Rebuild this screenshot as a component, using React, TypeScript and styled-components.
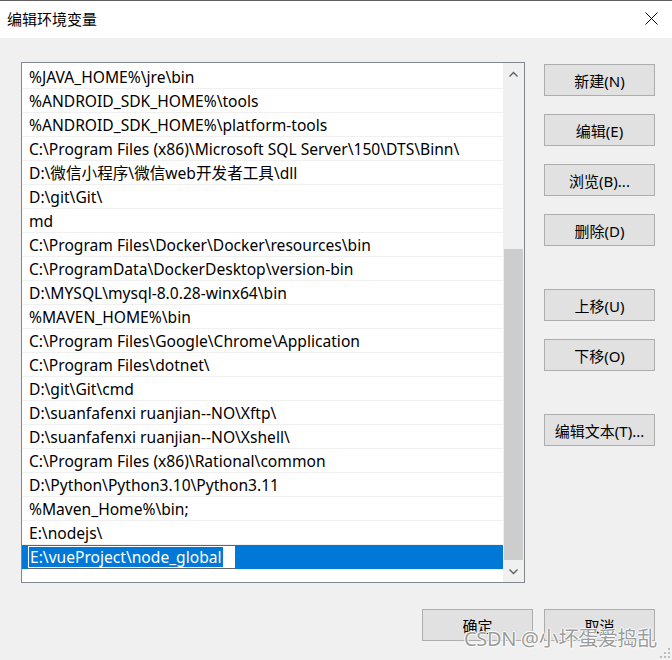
import React from 'react';
import styled, { createGlobalStyle } from 'styled-components';

const GlobalStyle = createGlobalStyle`
  html, body {
    margin: 0;
    padding: 0;
    background: #f0f0f0;
  }
  * {
    box-sizing: border-box;
  }
`;

const UI_FONT = `"Noto Sans", "Noto Sans CJK SC", sans-serif`;

const Window = styled.div`
  position: relative;
  width: 672px;
  height: 660px;
  background: #f0f0f0;
  display: flex;
  flex-direction: column;
  font-family: ${UI_FONT};
  color: #000;
  overflow: hidden;
`;

const TitleBar = styled.div`
  height: 38px;
  flex-shrink: 0;
  background: #fff;
  border-top: 1px solid #5f5f5f;
  display: flex;
  align-items: center;
  justify-content: space-between;
  padding: 0 14px 2px 7px;
`;

const Title = styled.div`
  font-family: "Noto Sans CJK SC", sans-serif;
  font-size: 15px;
`;

const CloseButton = styled.div`
  width: 13px;
  height: 13px;
  display: flex;
`;

const Body = styled.div`
  flex: 1;
  display: flex;
  flex-direction: column;
  padding: 24px 17px 0 21px;
`;

const Main = styled.div`
  display: flex;
  gap: 19px;
`;

const ListBox = styled.div`
  width: 504px;
  height: 521px;
  border: 1px solid #828790;
  background: #fff;
  display: flex;
`;

const Rows = styled.div`
  flex: 1;
  padding-top: 2px;
  display: flex;
  flex-direction: column;
`;

const Row = styled.div<{ $selected?: boolean }>`
  height: 24px;
  flex-shrink: 0;
  border-bottom: 1px solid ${({ $selected }) => ($selected ? '#0078d7' : '#f0f0f0')};
  background: ${({ $selected }) => ($selected ? '#0078d7' : '#fff')};
  display: flex;
  align-items: center;
  padding-left: 7px;
  font-size: 15.6px;
  white-space: nowrap;
`;

const EditBox = styled.div`
  margin-left: -2px;
  height: 24px;
  margin-top: 1px;
  width: 209px;
  background: #fff;
  border: 1px solid #646464;
  display: flex;
  align-items: stretch;
  padding: 1px;
`;

const EditSelection = styled.span`
  background: #0078d7;
  color: #fff;
  display: flex;
  align-items: center;
  padding: 0 1px;
`;

const ScrollBar = styled.div`
  width: 21px;
  background: #f0f0f0;
  display: flex;
  flex-direction: column;
`;

const ScrollArrow = styled.div`
  height: 21px;
  flex-shrink: 0;
  display: flex;
  align-items: center;
  justify-content: center;
`;

const ScrollTrack = styled.div`
  flex: 1;
  display: flex;
  flex-direction: column;
  padding: 0 1px;
`;

const Thumb = styled.div`
  background: #cdcdcd;
`;

const ButtonColumn = styled.div`
  display: flex;
  flex-direction: column;
  padding-top: 2px;
`;

const Button = styled.div<{ $gap?: number }>`
  width: 111px;
  height: 32px;
  margin-top: ${({ $gap }) => $gap ?? 0}px;
  background: #e1e1e1;
  border: 1px solid #adadad;
  display: flex;
  align-items: center;
  justify-content: center;
  font-family: ${UI_FONT};
  font-size: 15px;
  white-space: nowrap;
`;

const Footer = styled.div`
  display: flex;
  justify-content: flex-end;
  gap: 11px;
  margin-top: 26px;
`;

const Watermark = styled.div`
  position: absolute;
  right: 15px;
  bottom: 8px;
  font-family: "Noto Sans", "Noto Sans CJK SC", sans-serif;
  font-size: 20px;
  color: #9b9b9b;
  letter-spacing: -0.3px;
  text-shadow: 1px 0 0 #fff, -1px 0 0 #fff, 0 1px 0 #fff, 0 -1px 0 #fff;
  pointer-events: none;
`;

const Grip = styled.div`
  position: absolute;
  right: 1px;
  bottom: 1px;
  width: 11px;
  height: 11px;
  display: flex;
`;

const paths = [
  '%JAVA_HOME%\\jre\\bin',
  '%ANDROID_SDK_HOME%\\tools',
  '%ANDROID_SDK_HOME%\\platform-tools',
  'C:\\Program Files (x86)\\Microsoft SQL Server\\150\\DTS\\Binn\\',
  'D:\\微信小程序\\微信web开发者工具\\dll',
  'D:\\git\\Git\\',
  'md',
  'C:\\Program Files\\Docker\\Docker\\resources\\bin',
  'C:\\ProgramData\\DockerDesktop\\version-bin',
  'D:\\MYSQL\\mysql-8.0.28-winx64\\bin',
  '%MAVEN_HOME%\\bin',
  'C:\\Program Files\\Google\\Chrome\\Application',
  'C:\\Program Files\\dotnet\\',
  'D:\\git\\Git\\cmd',
  'D:\\suanfafenxi ruanjian--NO\\Xftp\\',
  'D:\\suanfafenxi ruanjian--NO\\Xshell\\',
  'C:\\Program Files (x86)\\Rational\\common',
  'D:\\Python\\Python3.10\\Python3.11',
  '%Maven_Home%\\bin;',
  'E:\\nodejs\\',
  'E:\\vueProject\\node_global',
];

const sideButtons = [
  { label: '新建(N)', gap: 0 },
  { label: '编辑(E)', gap: 18 },
  { label: '浏览(B)...', gap: 18 },
  { label: '删除(D)', gap: 18 },
  { label: '上移(U)', gap: 43 },
  { label: '下移(O)', gap: 18 },
  { label: '编辑文本(T)...', gap: 43 },
];

const Chevron = ({ up }: { up?: boolean }) => (
  <svg width="9" height="6" viewBox="0 0 9 6">
    <polyline
      points={up ? '0.5,5.5 4.5,1.5 8.5,5.5' : '0.5,0.5 4.5,4.5 8.5,0.5'}
      fill="none"
      stroke="#606060"
      strokeWidth="1.4"
    />
  </svg>
);

const App = () => {
  const selected = paths.length - 1;
  // thumb placement in px along the track
  const thumbTop = 165;
  const thumbHeight = 311;

  return (
    <Window>
      <GlobalStyle />
      <TitleBar>
        <Title>编辑环境变量</Title>
        <CloseButton>
          <svg width="13" height="13" viewBox="0 0 13 13">
            <path d="M0.5 0.5 L12.5 12.5 M12.5 0.5 L0.5 12.5" stroke="#000" strokeWidth="1" />
          </svg>
        </CloseButton>
      </TitleBar>
      <Body>
        <Main>
          <ListBox>
            <Rows>
              {paths.map((p, i) =>
                i === selected ? (
                  <Row key={p} $selected>
                    <EditBox>
                      <EditSelection>{p}</EditSelection>
                    </EditBox>
                  </Row>
                ) : (
                  <Row key={p}>{p}</Row>
                )
              )}
            </Rows>
            <ScrollBar>
              <ScrollArrow>
                <Chevron up />
              </ScrollArrow>
              <ScrollTrack>
                <Thumb style={{ marginTop: thumbTop, height: thumbHeight }} />
              </ScrollTrack>
              <ScrollArrow>
                <Chevron />
              </ScrollArrow>
            </ScrollBar>
          </ListBox>
          <ButtonColumn>
            {sideButtons.map((b) => (
              <Button key={b.label} $gap={b.gap}>
                {b.label}
              </Button>
            ))}
          </ButtonColumn>
        </Main>
        <Footer>
          <Button>确定</Button>
          <Button>取消</Button>
        </Footer>
      </Body>
      <Watermark>CSDN @小坏蛋爱捣乱</Watermark>
      <Grip>
        <svg width="11" height="11" viewBox="0 0 11 11">
          {[
            [8, 0],
            [8, 4],
            [4, 4],
            [8, 8],
            [4, 8],
            [0, 8],
          ].map(([x, y]) => (
            <rect key={`${x}-${y}`} x={x} y={y} width="2" height="2" fill="#bcbcbc" />
          ))}
        </svg>
      </Grip>
    </Window>
  );
};

export default App;
